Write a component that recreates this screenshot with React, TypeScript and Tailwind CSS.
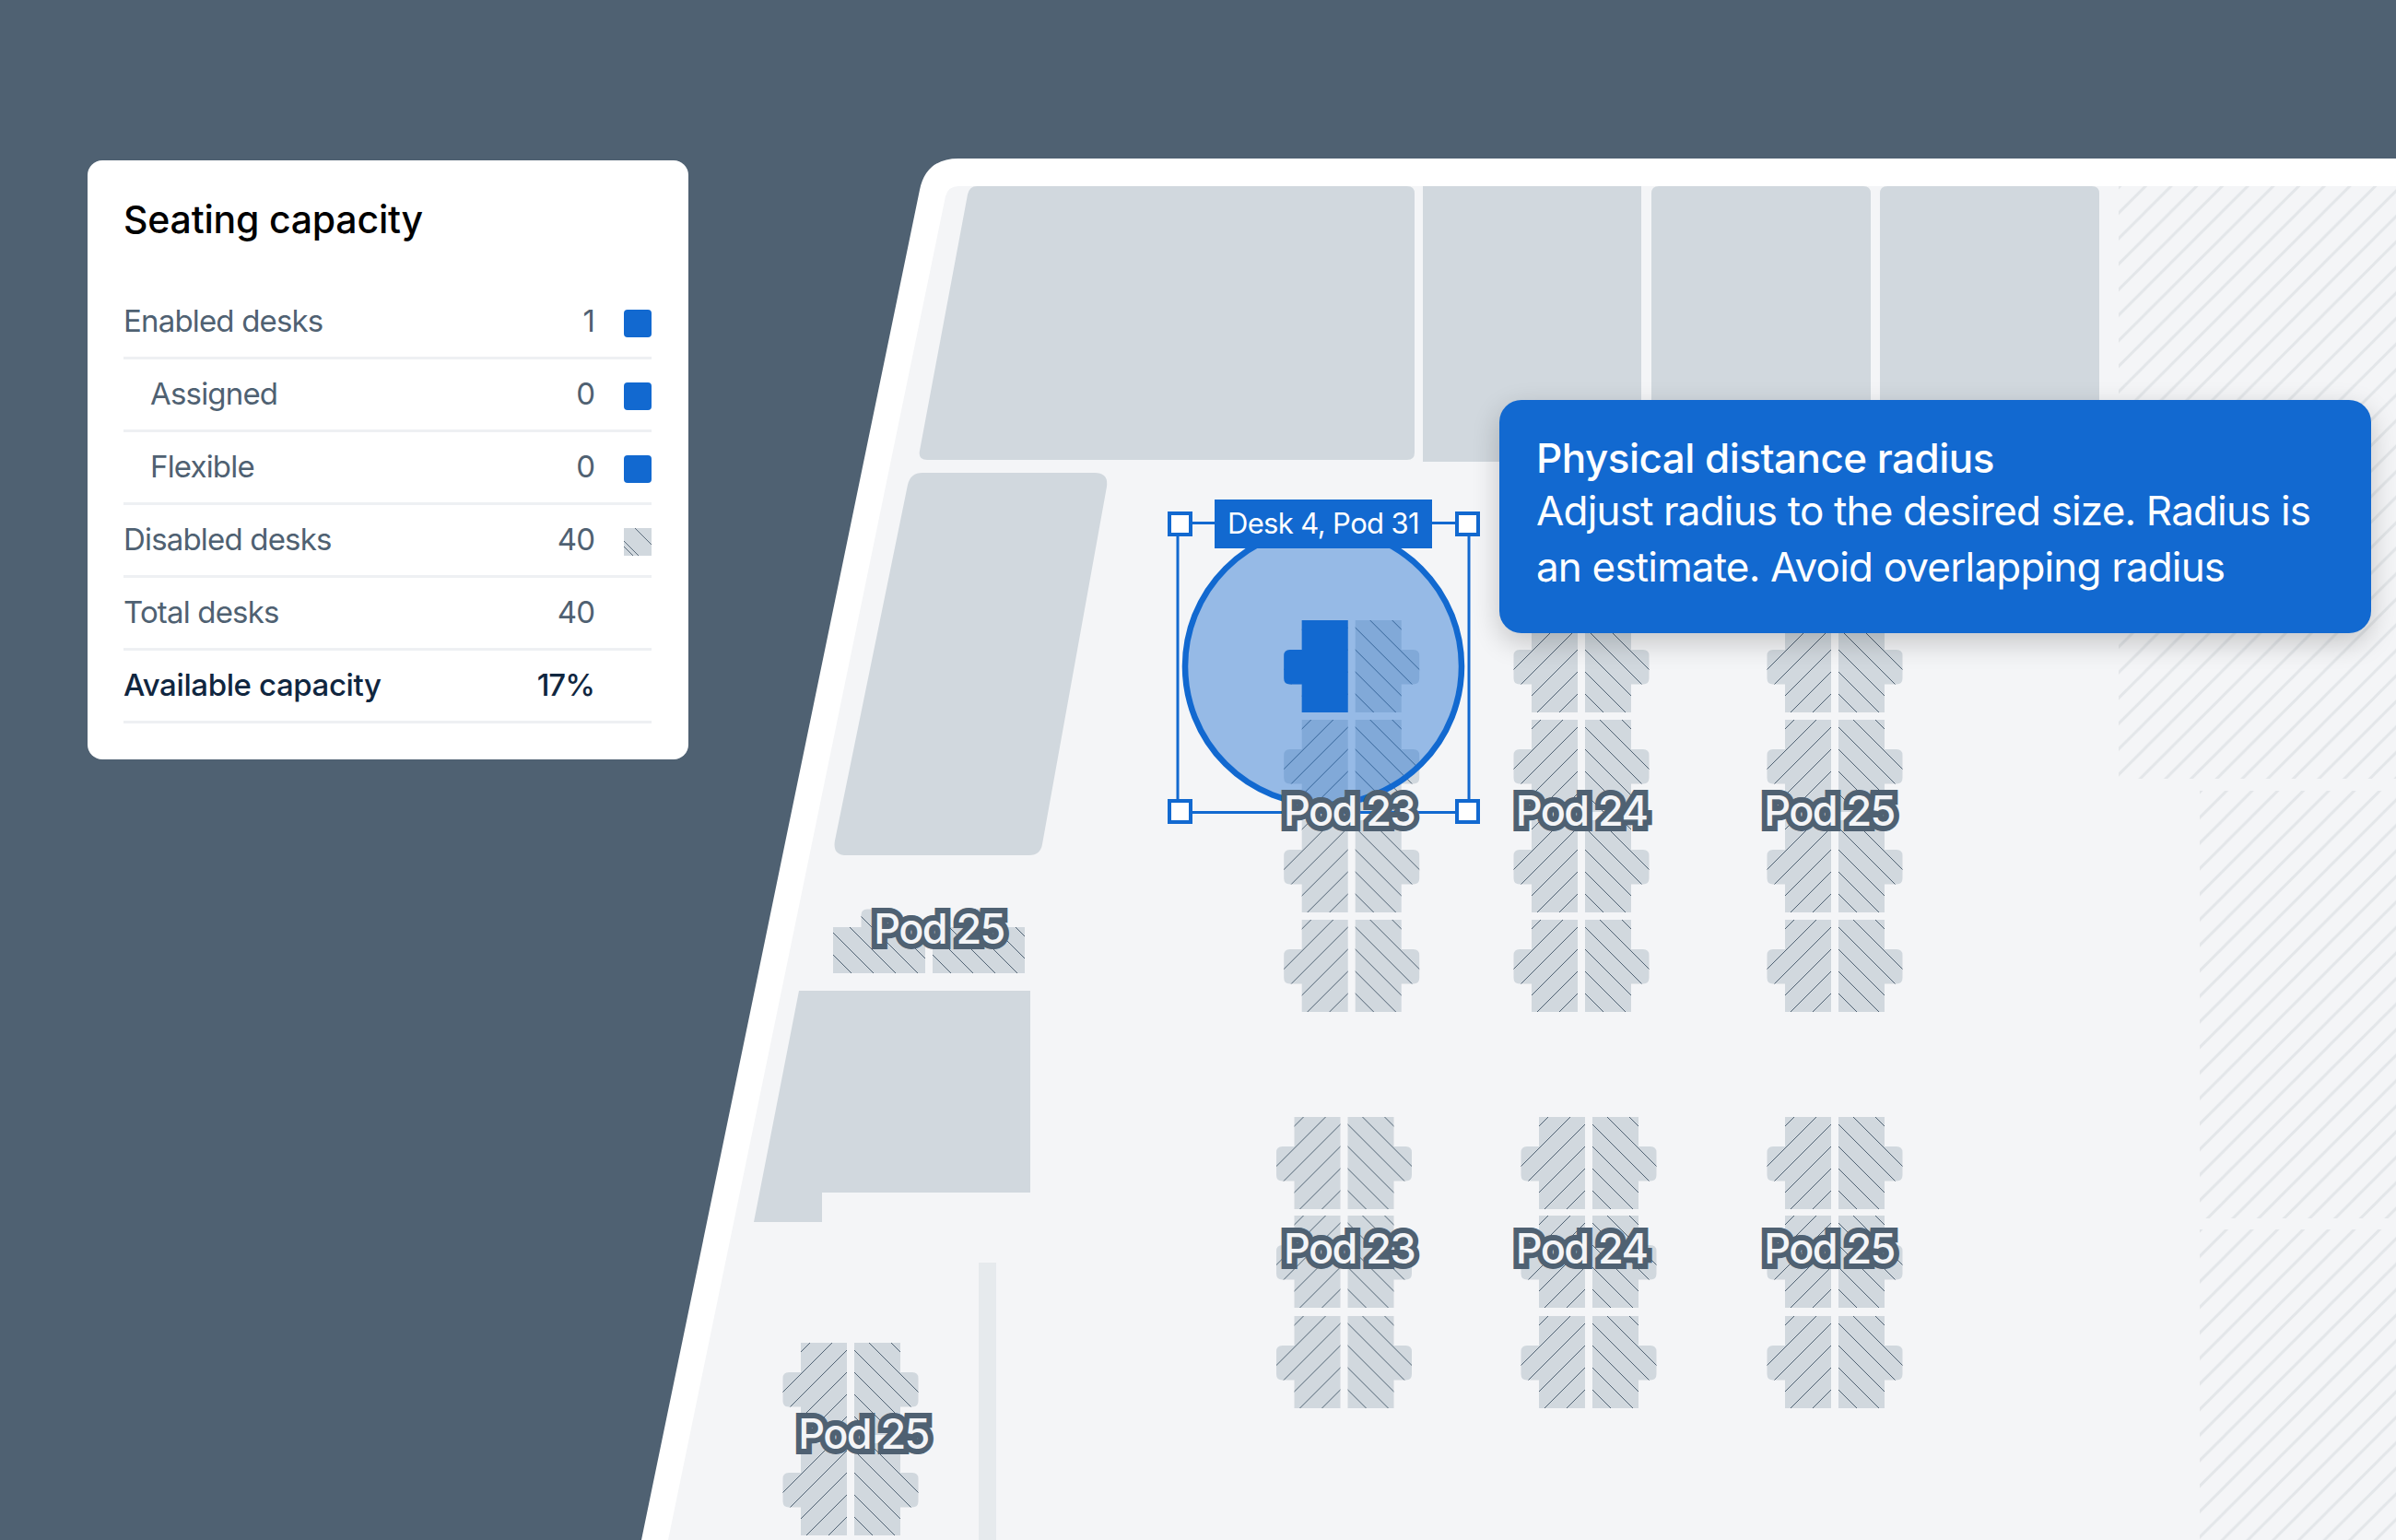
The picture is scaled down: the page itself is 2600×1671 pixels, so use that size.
const SANS = "font-['Inter','Liberation_Sans',sans-serif]";

const ROWS = [
  { label: "Enabled desks", value: "1", swatch: "blue" },
  { label: "Assigned", value: "0", swatch: "blue", indent: true },
  { label: "Flexible", value: "0", swatch: "blue", indent: true },
  { label: "Disabled desks", value: "40", swatch: "hatch" },
  { label: "Total desks", value: "40" },
  { label: "Available capacity", value: "17%", strong: true },
];

const DESK_PATH =
  "M0 0H50V32H63Q69.5 32 69.5 38.5V63Q69.5 69.5 63 69.5H50V100H0Z";

// centre line of each pod and the top of its rows
const PODS = [
  { cx: 1466.7, rows: [673, 781, 890, 998] },
  { cx: 1716, rows: [673, 781, 890, 998] },
  { cx: 1991, rows: [673, 781, 890, 998] },
  { cx: 1458.5, rows: [1212, 1319, 1428] },
  { cx: 1724, rows: [1212, 1319, 1428] },
  { cx: 1991, rows: [1212, 1319, 1428] },
  { cx: 923, rows: [1457, 1566] },
];

const LABELS = [
  { text: "Pod 23", x: 1464, y: 879 },
  { text: "Pod 24", x: 1716, y: 879 },
  { text: "Pod 25", x: 1985, y: 879 },
  { text: "Pod 25", x: 1019, y: 1007 },
  { text: "Pod 23", x: 1464, y: 1354 },
  { text: "Pod 24", x: 1716, y: 1354 },
  { text: "Pod 25", x: 1985, y: 1354 },
  { text: "Pod 25", x: 937, y: 1555 },
];

const HATCH_AREAS = [
  { x: 2299, y: 202, w: 301, h: 643 },
  { x: 2387, y: 858, w: 213, h: 464 },
  { x: 2387, y: 1334, w: 213, h: 337 },
];

const HANDLES = [
  [1267, 555],
  [1579, 555],
  [1267, 867],
  [1579, 867],
];

function Desk({ transform, selected }: { transform: string; selected?: boolean }) {
  if (selected) {
    return <path d={DESK_PATH} transform={transform} fill="#1269d0" />;
  }
  return (
    <g transform={transform}>
      <path d={DESK_PATH} fill="#d1d8de" />
      <path d={DESK_PATH} fill="url(#desk-hatch)" />
    </g>
  );
}

function FloorPlan() {
  return (
    <svg
      className="absolute inset-0"
      width="2600"
      height="1671"
      viewBox="0 0 2600 1671"
      fill="none"
    >
      <defs>
        <pattern id="desk-hatch" width="24" height="24" patternUnits="userSpaceOnUse">
          <path d="M10 -6L46 30M-14 -6L22 30" stroke="#4f6172" strokeWidth="1" />
        </pattern>
        <pattern id="area-hatch" width="27.7" height="27.7" patternUnits="userSpaceOnUse">
          <path d="M8 -6.5L-6 7.5M35.7 -6.5L-6 35.2M35.7 21.2L21.7 35.2" stroke="#e3e6e9" strokeWidth="3" />
        </pattern>
      </defs>

      <path d="M2600 172H1040Q1005 172 998 206L696 1671H2600Z" fill="#fff" />
      <path d="M2600 202H1040Q1029 202 1026 213L725 1671H2600Z" fill="#f4f5f7" />

      <path
        d="M1060 202H1527Q1535 202 1535 210V491Q1535 499 1527 499H1006Q996 499 998 489L1050 211Q1052 202 1060 202Z"
        fill="#d1d8de"
      />
      <path d="M1544 202H1781V501H1544Z" fill="#d1d8de" />
      <path d="M1800 202H2022Q2030 202 2030 210V500H1792V210Q1792 202 1800 202Z" fill="#d1d8de" />
      <path d="M2048 202H2270Q2278 202 2278 210V500H2040V210Q2040 202 2048 202Z" fill="#d1d8de" />
      <path
        d="M1001 513H1188Q1203 513 1201 528L1131 916Q1129 928 1117 928H919Q903 928 906 912L985 526Q988 513 1001 513Z"
        fill="#d1d8de"
      />
      <path d="M867 1075H1118V1294H892V1326H818Z" fill="#d1d8de" />
      <path d="M1062 1370H1081V1671H1062Z" fill="#e6eaed" />

      {HATCH_AREAS.map((a) => (
        <g key={a.y} transform={`translate(${a.x} ${a.y})`}>
          <rect width={a.w} height={a.h} fill="url(#area-hatch)" />
        </g>
      ))}

      {PODS.map((pod) =>
        pod.rows.map((top) => (
          <g key={`${pod.cx}-${top}`}>
            <Desk transform={`matrix(-1 0 0 1 ${pod.cx - 4} ${top})`} />
            <Desk transform={`translate(${pod.cx + 4} ${top})`} />
          </g>
        )),
      )}
      <Desk transform="matrix(0 -1 -1 0 1004 1056)" />
      <Desk transform="matrix(0 -1 -1 0 1112 1056)" />

      {/* selected desk and its physical distance radius */}
      <circle cx="1436" cy="723" r="150" fill="#1269d0" fillOpacity="0.42" stroke="#1269d0" strokeWidth="6.5" />
      <Desk selected transform="matrix(-1 0 0 1 1462.7 673)" />

      <path d="M1280 567.5H1592M1278 582V867M1594 582V867M1280 881.5H1592" stroke="#1269d0" strokeWidth="3" />
      {HANDLES.map(([x, y]) => (
        <rect key={`${x}-${y}`} x={x + 2} y={y + 2} width="23" height="23" fill="#fff" stroke="#1269d0" strokeWidth="4" />
      ))}
    </svg>
  );
}

function PodLabel({ text, x, y }: { text: string; x: number; y: number }) {
  return (
    <div
      className="absolute -translate-x-1/2 -translate-y-1/2 whitespace-nowrap text-[45px] leading-none font-medium tracking-[-0.035em] text-[#f4f5f7] [-webkit-text-stroke:12px_#4f6172] [paint-order:stroke_fill]"
      style={{ left: x, top: y }}
    >
      {text}
    </div>
  );
}

function HatchSwatch() {
  return (
    <svg width="30" height="30" viewBox="0 0 30 30" className="block">
      <rect width="30" height="30" fill="#d1d8de" />
      <path d="M12 0L30 18M-6 8L22 36M0 20L10 30" stroke="#5b6b7a" strokeWidth="1" />
    </svg>
  );
}

function CapacityCard() {
  return (
    <div className="relative z-10 flex h-[650px] w-[652px] flex-col rounded-2xl bg-white pt-[39px] pr-10 pl-[39px]">
      <h2 className="h-[98px] text-[41px] leading-[50px] font-medium tracking-[-0.005em] text-black">Seating capacity</h2>
      {ROWS.map((row) => (
        <div key={row.label} className="flex h-[79px] items-center border-b-[3px] border-[#eef0f3]">
          <span
            className={`flex-1 text-[33px] ${row.indent ? "pl-[29px]" : ""} ${
              row.strong
                ? "font-medium tracking-[-0.012em] text-[#10263f]"
                : "tracking-[-0.025em] text-[#4f6172]"
            }`}
          >
            {row.label}
          </span>
          <span className={`text-[33px] tracking-[-0.03em] ${row.strong ? "font-medium text-[#10263f]" : "text-[#4f6172]"}`}>
            {row.value}
          </span>
          <span className="mt-[3px] ml-[32px] h-[30px] w-[30px]">
            {row.swatch === "blue" && <span className="block h-[30px] w-[30px] rounded-[4px] bg-[#1269d0]" />}
            {row.swatch === "hatch" && <HatchSwatch />}
          </span>
        </div>
      ))}
    </div>
  );
}

export default function App() {
  return (
    <div className={`relative h-[1671px] w-[2600px] overflow-hidden bg-[#4f6172] pt-[174px] pl-[95px] ${SANS}`}>
      <FloorPlan />
      {LABELS.map((l) => (
        <PodLabel key={`${l.x}-${l.y}`} {...l} />
      ))}
      <div className="absolute top-[542px] left-[1318px] flex h-[53px] w-[236px] items-center justify-center bg-[#1269d0] text-[31px] tracking-[-0.02em] text-white">
        Desk 4, Pod 31
      </div>
      <CapacityCard />
      <div className="absolute top-[434px] left-[1627px] h-[253px] w-[946px] rounded-[24px] bg-[#1269d0] pt-[37px] pl-[40px] text-[44px] leading-[61px] tracking-[-0.019em] text-white shadow-[0_10px_30px_rgba(0,0,0,0.2)]">
        <div className="leading-[53px] font-medium tracking-[-0.012em]">Physical distance radius</div>
        <div>Adjust radius to the desired size. Radius is</div>
        <div>an estimate. Avoid overlapping radius</div>
      </div>
    </div>
  );
}
